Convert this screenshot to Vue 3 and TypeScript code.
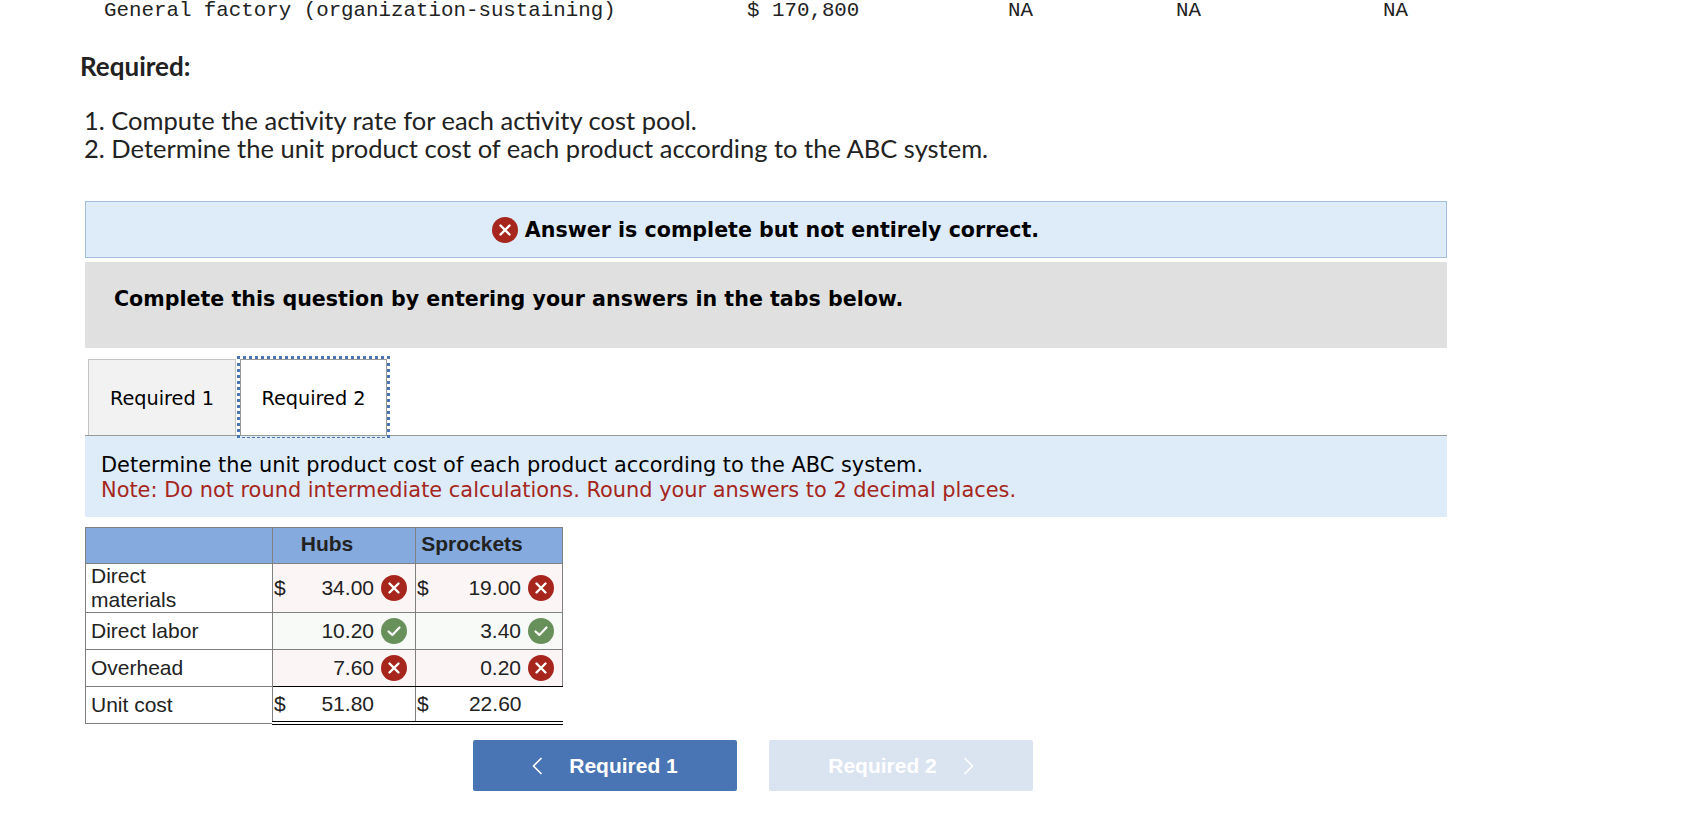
<script setup lang="ts">
type Mark = 'x' | 'ok' | null

interface Cell {
  sign?: boolean
  value: string
  mark: Mark
}

interface Row {
  label: string
  cells: Cell[]
  total?: boolean
}

const rows: Row[] = [
  {
    label: 'Direct materials',
    cells: [
      { sign: true, value: '34.00', mark: 'x' },
      { sign: true, value: '19.00', mark: 'x' },
    ],
  },
  {
    label: 'Direct labor',
    cells: [
      { value: '10.20', mark: 'ok' },
      { value: '3.40', mark: 'ok' },
    ],
  },
  {
    label: 'Overhead',
    cells: [
      { value: '7.60', mark: 'x' },
      { value: '0.20', mark: 'x' },
    ],
  },
  {
    label: 'Unit cost',
    total: true,
    cells: [
      { sign: true, value: '51.80', mark: null },
      { sign: true, value: '22.60', mark: null },
    ],
  },
]
</script>

<template>
  <div class="sheet">
    <div class="pool-row">
      <span>General factory (organization-sustaining)</span>
      <span>$ 170,800</span>
      <span>NA</span>
      <span>NA</span>
      <span>NA</span>
    </div>

    <h2 class="required">Required:</h2>
    <ol class="tasks">
      <li>1. Compute the activity rate for each activity cost pool.</li>
      <li>2. Determine the unit product cost of each product according to the ABC system.</li>
    </ol>

    <div class="banner">
      <svg class="icon" viewBox="0 0 26 26">
        <circle cx="13" cy="13" r="13" fill="#a6261d" />
        <path d="M8.5 8.5l9 9M17.5 8.5l-9 9" stroke="#fff" stroke-width="2.4" stroke-linecap="round" />
      </svg>
      <span>Answer is complete but not entirely correct.</span>
    </div>

    <div class="instructions">Complete this question by entering your answers in the tabs below.</div>

    <div class="tabs">
      <button class="tab">Required 1</button>
      <button class="tab active">Required 2</button>
    </div>

    <div class="prompt">
      <div>Determine the unit product cost of each product according to the ABC system.</div>
      <div class="note">Note: Do not round intermediate calculations. Round your answers to 2 decimal places.</div>
    </div>

    <table class="costs">
      <colgroup>
        <col class="c-label" />
        <col class="c-hubs" />
        <col class="c-sprockets" />
      </colgroup>
      <thead>
        <tr>
          <th></th>
          <th>Hubs</th>
          <th>Sprockets</th>
        </tr>
      </thead>
      <tbody>
        <tr v-for="row in rows" :key="row.label" :class="{ total: row.total }">
          <td class="label">{{ row.label }}</td>
          <td v-for="(cell, i) in row.cells" :key="i" :class="['amount', cell.mark]">
            <div class="amount-inner">
              <span class="sign">{{ cell.sign ? '$' : '' }}</span>
              <span class="value">{{ cell.value }}</span>
              <span class="mark">
                <svg v-if="cell.mark === 'x'" class="icon" viewBox="0 0 26 26">
                  <circle cx="13" cy="13" r="13" fill="#a6261d" />
                  <path d="M8.5 8.5l9 9M17.5 8.5l-9 9" stroke="#fff" stroke-width="2.4" stroke-linecap="round" />
                </svg>
                <svg v-else-if="cell.mark === 'ok'" class="icon" viewBox="0 0 26 26">
                  <circle cx="13" cy="13" r="13" fill="#67905a" />
                  <path d="M7.5 13.5l3.8 3.4 7.2-7.4" fill="none" stroke="#fff" stroke-width="2.2" stroke-linecap="round" stroke-linejoin="round" />
                </svg>
              </span>
            </div>
          </td>
        </tr>
      </tbody>
    </table>

    <div class="pager">
      <button class="page-btn">
        <svg class="chev" viewBox="0 0 11 18">
          <path d="M9.5 1L1.5 9l8 8" fill="none" stroke="#fff" stroke-width="1.6" />
        </svg>
        <span>Required 1</span>
      </button>
      <button class="page-btn disabled">
        <span>Required 2</span>
        <svg class="chev" viewBox="0 0 11 18">
          <path d="M1.5 1l8 8-8 8" fill="none" stroke="#fff" stroke-width="1.6" />
        </svg>
      </button>
    </div>
  </div>
</template>

<style>
html,
body {
  background: #fff;
}
</style>

<style scoped>
.sheet {
  box-sizing: border-box;
  width: 1706px;
  height: 838px;
  padding: 0 259px 0 85px;
  overflow: hidden;
  color: #222;
  font-family: "Liberation Sans", Arial, sans-serif;
}
.pool-row {
  display: grid;
  grid-template-columns: 643px 261px 168px 207px 1fr;
  margin: 0 -259px 0 19px;
  padding-top: 1px;
  height: 21px;
  font-family: "Liberation Mono", monospace;
  font-size: 20.8px;
  line-height: 20px;
}
.required {
  margin: 31px 0 0 -5px;
  font-family: Lato, sans-serif;
  font-size: 26px;
  font-weight: 700;
  line-height: 26px;
}
.tasks {
  margin: 27px 0 0 -1px;
  padding: 0;
  list-style: none;
  font-family: Lato, sans-serif;
  font-size: 25.5px;
  line-height: 28px;
}
.banner {
  display: flex;
  align-items: center;
  justify-content: center;
  gap: 7px;
  box-sizing: border-box;
  height: 57px;
  margin-top: 39px;
  padding-right: 1px;
  border: 1px solid #a3bfde;
  background: #deebf8;
  color: #000;
  font-family: "DejaVu Sans", sans-serif;
  font-size: 20.6px;
  font-weight: 700;
}
.icon {
  display: block;
  flex: none;
  width: 26px;
  height: 26px;
}
.instructions {
  box-sizing: border-box;
  height: 86px;
  margin-top: 4px;
  padding: 22px 0 0 29px;
  background: #e0e0e0;
  color: #000;
  font-family: "DejaVu Sans", sans-serif;
  font-size: 20.6px;
  font-weight: 700;
  line-height: 30px;
}
.tabs {
  display: flex;
  gap: 4px;
  height: 76px;
  margin: 11px 0 0 3px;
}
.tab {
  position: relative;
  box-sizing: border-box;
  width: 148px;
  height: 76px;
  padding: 2px 0 0;
  border: 1px solid #c4c4c4;
  border-bottom: none;
  background: #f2f2f2;
  color: #000;
  font-family: "DejaVu Sans", sans-serif;
  font-size: 19.3px;
}
.tab.active {
  width: 147px;
  border-color: #999;
  background: #fff;
  z-index: 1;
}
.tab.active::after {
  content: "";
  position: absolute;
  top: -4px;
  left: -4px;
  right: -4px;
  bottom: -3px;
  border: 3px dotted #4a75b5;
  border-bottom: 1px dashed #4a75b5;
}
.prompt {
  box-sizing: border-box;
  height: 82px;
  padding: 17px 0 0 16px;
  border-top: 1px solid #999;
  background: #deebf8;
  color: #000;
  font-family: "DejaVu Sans", sans-serif;
  font-size: 20.9px;
  line-height: 25px;
}
.note {
  color: #a6261d;
}
.costs {
  width: 477px;
  margin-top: 10px;
  border-collapse: collapse;
  table-layout: fixed;
  font-size: 21px;
  line-height: 24px;
}
.c-label {
  width: 187px;
}
.c-hubs {
  width: 143px;
}
.c-sprockets {
  width: 147px;
}
.costs th,
.costs td {
  padding: 0;
  border: 1px solid #808080;
}
.costs th {
  height: 32px;
  padding: 0 34px 3px 0;
  background: #84aade;
  font-weight: 700;
  text-align: center;
}
.costs td {
  height: 36px;
}
.costs tbody tr:first-child td {
  height: 48px;
}
.costs .total td {
  height: 34px;
}
.costs .label {
  padding: 0 60px 0 5px;
}
.amount.x {
  background: #fbf5f5;
}
.amount.ok {
  background: #f7faf6;
}
.costs tr:has(+ .total) .amount {
  border-bottom-color: #000;
}
.total .amount {
  border-bottom: 4px double #000;
}
.total .amount:last-child {
  border-right: none;
}
.amount-inner {
  display: flex;
  align-items: center;
  padding: 0 8px 0 1px;
}
.sign {
  width: 22px;
}
.value {
  flex: 1;
  text-align: right;
}
.mark {
  width: 26px;
  margin-left: 7px;
}
.pager {
  display: flex;
  gap: 32px;
  margin: 15px 0 0 388px;
}
.page-btn {
  display: flex;
  align-items: center;
  justify-content: center;
  gap: 26px;
  box-sizing: border-box;
  width: 264px;
  height: 51px;
  padding: 0;
  border: none;
  border-radius: 2px;
  background: #4a75b5;
  color: #fff;
  font-family: "Liberation Sans", Arial, sans-serif;
  font-size: 21px;
  font-weight: 700;
}
.page-btn.disabled {
  background: #dae3f0;
}
.chev {
  width: 11px;
  height: 18px;
}
</style>
